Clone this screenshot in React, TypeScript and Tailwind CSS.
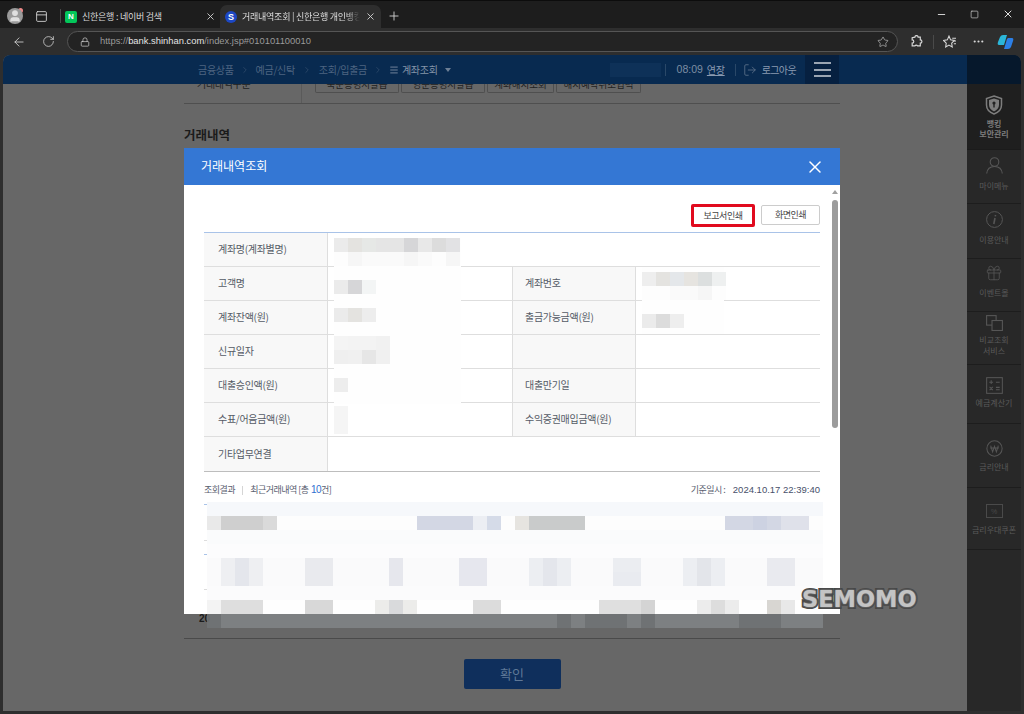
import React from 'react';
import { ArrowLeft, RotateCw, Lock, Star, X, Plus, Minus, Square, MoreHorizontal, ChevronRight, Menu, LogOut, User, Gift, PanelTop } from 'lucide-react';

const kr = 'font-["Noto_Sans_CJK_KR","Noto_Sans",sans-serif]';

type Mosaic = { x: number; y: number; rows: string[][] };

const a = '#ebebeb', b = '#e4e3e0', c = '#d6d6d8', d = '#f6f6f6', e = '#fafafa', w = '#fdfdfd';

// blurred customer data in the account table
const accountBlur: Mosaic[] = [
  { x: 334, y: 238, rows: [[a, b, '#e6e8e6', '#e5e5e5', '#e5e5e5', c, '#e8e8e8', '#dcdcdc', '#e2e2e4'], [w, d, e, e, e, d, e, w, d]] },
  { x: 334, y: 280, rows: [[a, c, '#f3f5f5']] },
  { x: 334, y: 308, rows: [[a, b, '#ededed']] },
  { x: 334, y: 336, rows: [['#f4f4f4', '#f3f3f3', '#f3f3f3', '#f1f1f1'], ['#efefef', '#f0f0f0', '#e6e6e6', '#f0f0f0']] },
  { x: 334, y: 378, rows: [['#ededed']] },
  { x: 334, y: 406, rows: [['#f5f5f5'], ['#f5f5f5']] },
  { x: 642, y: 272, rows: [['#eeeeee', b, '#e4e7ea', '#e6e4e0', '#dcdfdf', '#eef0f0'], [w, w, e, e, d, w]] },
  { x: 642, y: 314, rows: [[a, '#dcdcdc', '#eeeeee']] },
];

// result table mosaic: 44 columns of 14px, 9 rows
const cols = 44;
const paint = (base: string, cells: [number[], string][]) => {
  const row = Array.from({ length: cols }, () => base);
  cells.forEach(([ks, color]) => ks.forEach(k => { row[k] = color; }));
  return row;
};
const blue = '#d3d7e4', gray = '#cfcfcf', pale = '#e9eaef';
const resultRows: string[][] = [
  paint('#f6f8fb', []),
  paint('#fdfdfd', [[[0], '#e9e9e9'], [[1, 2, 3], gray], [[4], '#dadada'], [[15, 16, 17, 18], blue], [[19], '#eceef3'], [[20], '#d5dbe8'], [[22], '#e6e4e0'], [[23, 24, 25, 26], '#c9cbcb'], [[37, 38, 40], blue], [[39], '#cdd2e2'], [[41, 42], '#dfe1ea']]),
  paint('#fafbfc', []),
  paint('#fcfcfd', []),
  paint('#fafafb', [[[1, 3], '#eeeff2'], [[2], '#e4e6ec'], [[7, 8], '#e9eaee'], [[13], '#e6e7ed'], [[18, 19], '#e6e7ee'], [[23, 25], '#eceef2'], [[24], '#e4e6ec'], [[29, 30], '#ebedf1'], [[34, 36], '#eceef2'], [[35], '#e3e5ea'], [[40, 41], pale]]),
  paint('#fafafb', [[[1, 3], '#eeeff2'], [[2], '#e4e6ec'], [[7, 8], '#e9eaee'], [[13], '#e6e7ed'], [[18, 19], '#e6e7ee'], [[23, 25], '#eceef2'], [[24], '#e4e6ec'], [[29, 30], '#e9ebf0'], [[34, 36], '#eceef2'], [[35], '#e3e5ea'], [[40, 41], pale]]),
  paint('#fbfbfc', []),
  paint('#fefefe', [[[0], '#f3f3f3'], [[1, 2, 3], '#dedede'], [[7, 8], '#d8d8d8'], [[12, 14], '#ececea'], [[13], '#d9dadc'], [[19, 20], '#dcdcdc'], [[28, 29, 30], '#dfdfdf'], [[31], '#d4d4d4'], [[35, 37], '#ececec'], [[36], '#dddddd'], [[40], '#d8d6d2'], [[41], '#e8e8e8']]),
];
const darker = [0, 25, 27, 28, 29, 31, 38, 39, 40];
const lastRow = Array.from({ length: cols }, (_, k) => (darker.includes(k) ? 'rgba(112,115,118,0.9)' : 'rgba(128,131,133,0.9)'));

function Pixels({ rows }: { rows: string[][] }) {
  return (
    <div className="flex flex-col">
      {rows.map((r, i) => (
        <div key={i} className="flex">
          {r.map((color, j) => <div key={j} className="w-[14px] h-[14px]" style={{ backgroundColor: color }} />)}
        </div>
      ))}
    </div>
  );
}

function ShieldIcon() {
  return (
    <svg width="18" height="20" viewBox="0 0 18 20" fill="none" stroke="#7d7d7d" strokeWidth="1.5">
      <path d="M9 1 L16.5 3.5 V10 C16.5 14.5 13 17.5 9 19 C5 17.5 1.5 14.5 1.5 10 V3.5 Z" />
      <path d="M4 5 L9 3.4 L14 5 V10 C14 13 12 15 9 16.4 C6 15 4 13 4 10 Z" fill="#7d7d7d" stroke="none" />
      <circle cx="9" cy="8" r="1.6" fill="#222" stroke="none" />
      <rect x="8.3" y="8.5" width="1.4" height="4" fill="#222" stroke="none" />
    </svg>
  );
}

function PersonIcon() {
  return (
    <svg width="17" height="17" viewBox="0 0 17 17" fill="none" stroke="#565656" strokeWidth="1.1">
      <circle cx="8.5" cy="5" r="4.3" />
      <path d="M0.7 16.5 C1.2 12 4 9.5 8.5 9.5 C13 9.5 15.8 12 16.3 16.5" />
    </svg>
  );
}

function InfoIcon() {
  return (
    <svg width="17" height="17" viewBox="0 0 17 17" fill="none" stroke="#565656" strokeWidth="1">
      <circle cx="8.5" cy="8.5" r="7.9" />
      <path d="M9.6 4 L9.3 5.4" strokeWidth="1.6" />
      <path d="M9 7 L7.8 13" strokeWidth="1.6" />
    </svg>
  );
}

function CompareIcon() {
  return (
    <svg width="17" height="16" viewBox="0 0 17 16" fill="none" stroke="#565656" strokeWidth="1.1">
      <rect x="0.6" y="0.6" width="9.5" height="9.5" />
      <rect x="6" y="5.5" width="10.4" height="10" fill="#282828" />
    </svg>
  );
}

function CalcIcon() {
  return (
    <svg width="17" height="17" viewBox="0 0 18 18" fill="none" stroke="#565656" strokeWidth="1.1">
      <rect x="0.7" y="0.7" width="16.6" height="16.6" />
      <path d="M3.5 5.5 H7.5 M5.5 3.5 V7.5 M10.5 5.5 H14.5 M3.8 10.5 L7.2 14 M7.2 10.5 L3.8 14 M10.5 11 H14.5 M10.5 13.5 H14.5" />
    </svg>
  );
}

function WonIcon() {
  return (
    <svg width="17" height="17" viewBox="0 0 20 20" fill="none" stroke="#565656" strokeWidth="1.2">
      <circle cx="10" cy="10" r="9" />
      <path d="M5.5 6.5 L7.8 14 L10 7.5 L12.2 14 L14.5 6.5 M4.8 9.5 H15.2" />
    </svg>
  );
}

function CouponIcon() {
  return (
    <div className="w-[17px] h-[14px] border border-[#4a4a4a] flex items-center justify-center text-[7px] leading-none text-[#4a4a4a] font-['Liberation_Sans',sans-serif]">%</div>
  );
}

const sideItems: { box: string; gap: string; icon: React.ReactNode; lines: string[] }[] = [
  { box: 'h-[54px] pt-[7px]', gap: 'mt-[6px]', icon: <PersonIcon />, lines: ['마이메뉴'] },
  { box: 'h-[55px] pt-[7px]', gap: 'mt-[6px]', icon: <InfoIcon />, lines: ['이용안내'] },
  { box: 'h-[53px] pt-[5px]', gap: 'mt-[5px]', icon: <Gift size={18} strokeWidth={1.1} color="#565656" />, lines: ['이벤트몰'] },
  { box: 'h-[53px] pt-[3px]', gap: 'mt-[3px]', icon: <CompareIcon />, lines: ['비교조회', '서비스'] },
  { box: 'h-[59px] pt-[12px]', gap: 'mt-[3px]', icon: <CalcIcon />, lines: ['예금계산기'] },
  { box: 'h-[64px] pt-[16px]', gap: 'mt-[4px]', icon: <WonIcon />, lines: ['금리안내'] },
  { box: 'h-[62px] pt-[16px]', gap: 'mt-[6px]', icon: <CouponIcon />, lines: ['금리우대쿠폰'] },
];

const infoRows: [string, string?][] = [
  ['고객명', '계좌번호'],
  ['계좌잔액(원)', '출금가능금액(원)'],
  ['신규일자', ''],
  ['대출승인액(원)', '대출만기일'],
  ['수표/어음금액(원)', '수익증권매입금액(원)'],
];

function Label({ children, first, last }: { children?: React.ReactNode; first?: boolean; last?: boolean }) {
  return (
    <div className={`h-[34px] pb-[2px] bg-[#f8f8f8] border-[#dedede] flex items-center text-[10px] tracking-[-0.3px] text-[#555b66] ${first ? 'border-r pl-[14px]' : 'border-x pl-[12px]'} ${last ? '' : 'border-b'}`}>
      {children}
    </div>
  );
}

function Value({ wide, last }: { wide?: boolean; last?: boolean }) {
  return <div className={`h-[34px] border-[#dedede] ${wide ? 'col-span-3' : ''} ${last ? '' : 'border-b'}`} />;
}

export default function App() {
  return (
    <div className={`relative w-[1024px] h-[714px] overflow-hidden bg-[#2e2e2e] flex flex-col ${kr}`}>
      {/* tab strip */}
      <div className="h-[28px] bg-[#1d1d1d] flex items-end shrink-0 pl-[7px] border-t border-[#0c0c0c]">
        <div className="relative w-[16px] h-[16px] rounded-full bg-[#9a9a9a] mb-[4px] flex items-center justify-center overflow-hidden">
          <User size={14} color="#e0e0e0" fill="#e0e0e0" />
        </div>
        <div className="w-[5px] h-[5px] rounded-full bg-[#e88] -ml-[5px] mb-[15px]" />
        <PanelTop size={13} color="#d8d8d8" strokeWidth={1.6} className="ml-[12px] mb-[5px]" />
        <div className="w-px h-[14px] bg-[#4a4a4a] ml-[12px] mb-[5px]" />
        <div className="w-[159px] h-[23px] flex items-center pl-[4px]">
          <div className="w-[12px] h-[12px] bg-[#03c75a] rounded-[2px] text-white text-[8px] font-bold leading-[12px] text-center font-['Liberation_Sans',sans-serif]">N</div>
          <span className="ml-[5px] text-[9px] tracking-[-0.25px] text-[#d8d8d8] whitespace-nowrap">신한은행 : 네이버 검색</span>
          <X size={11} color="#d0d0d0" className="ml-auto mr-[4px]" />
        </div>
        <div className="w-[161px] h-[23px] bg-[#2e2e2e] rounded-t-[7px] flex items-center pl-[5px]">
          <div className="w-[12px] h-[12px] rounded-full bg-[#1c47c4] text-white text-[9px] font-bold leading-[12px] text-center font-['Liberation_Sans',sans-serif]">S</div>
          <span className="ml-[5px] w-[118px] overflow-hidden text-[9px] tracking-[-0.25px] text-[#dddddd] whitespace-nowrap [mask-image:linear-gradient(to_right,black_88%,transparent)]">거래내역조회 | 신한은행 개인뱅킹</span>
          <X size={11} color="#d0d0d0" className="ml-auto mr-[5px]" />
        </div>
        <Plus size={14} color="#d8d8d8" strokeWidth={1.5} className="ml-[6px] mb-[5px]" />
        <div className="ml-auto flex items-center self-start mt-[7px] mr-[10px] gap-[23px]">
          <Minus size={11} color="#e0e0e0" />
          <Square size={9} color="#e0e0e0" strokeWidth={1.6} className="rounded-[2px]" />
          <X size={12} color="#e0e0e0" />
        </div>
      </div>

      {/* toolbar */}
      <div className="h-[27px] bg-[#2e2e2e] flex items-center shrink-0 pl-[12px] pr-[8px]">
        <ArrowLeft size={14} color="#d8d8d8" strokeWidth={1.4} />
        <RotateCw size={13} color="#d8d8d8" strokeWidth={1.4} className="ml-[16px]" />
        <div className="ml-[12px] w-[831px] h-[21px] rounded-full bg-[#232323] border border-[#555555] flex items-center pl-[12px] pr-[8px]">
          <Lock size={10} color="#d8d8d8" strokeWidth={1.6} />
          <span className="ml-[10px] text-[9.4px] text-[#9a9a9a] font-['Liberation_Sans',sans-serif] whitespace-nowrap">https://<span className="text-[#e4e4e4]">bank.shinhan.com</span>/index.jsp#010101100010</span>
          <Star size={12} color="#c8c8c8" strokeWidth={1.3} className="ml-auto" />
        </div>
        <svg width="13" height="13" viewBox="0 0 24 24" fill="none" stroke="#d8d8d8" strokeWidth="2.2" className="ml-[12px]">
          <path d="M9 4a3 3 0 0 1 6 0h4v5a3 3 0 0 1 0 6v5h-5a3 3 0 0 0-5 0H4v-5a3 3 0 0 0 0-6V5z" />
        </svg>
        <div className="w-px h-[14px] bg-[#4a4a4a] ml-[10px]" />
        <svg width="13" height="13" viewBox="0 0 24 24" fill="none" stroke="#d8d8d8" strokeWidth="2" className="ml-[9px]">
          <path d="M11 2 L14 9 L21 10 L16 15 L17 22 L11 18.5 L5 22 L6 15 L1 10 L8 9 Z" />
          <path d="M17 6 H24 M19 11 H24 M20 16 H24" />
        </svg>
        <MoreHorizontal size={13} color="#d8d8d8" className="ml-[16px]" />
        <svg width="17" height="17" viewBox="0 0 17 17" className="ml-[12px]">
          <path d="M6 2 H10 L7 12 H2 Q0 12 1 9 L3 4 Q4 2 6 2 Z" fill="#2bb6d9" />
          <path d="M11 5 H15 Q17 5 16 8 L14 14 Q13 16 11 16 H7 L10 6 Z" fill="#2c7fe6" />
        </svg>
      </div>

      {/* page */}
      <div className="relative flex-1 mx-[3px] mb-[3px] rounded-t-[7px] overflow-hidden flex bg-[#676767]">
        <div className="w-[964px] flex flex-col">
          <div className="h-[29px] bg-[#082a50] flex items-center shrink-0 pl-[195px] text-[10px] tracking-[-0.3px] text-[#4d6480] whitespace-nowrap">
            <span>금융상품</span>
            <ChevronRight size={10} className="mx-[6px]" color="#2f4b6b" />
            <span>예금/신탁</span>
            <ChevronRight size={10} className="mx-[7px]" color="#2f4b6b" />
            <span>조회/입출금</span>
            <ChevronRight size={10} className="mx-[6px]" color="#2f4b6b" />
            <Menu size={10} color="#8494a8" />
            <span className="ml-[3px] text-[#8494a8]">계좌조회</span>
            <span className="ml-[7px] w-0 h-0 border-x-[3px] border-x-transparent border-t-[4px] border-t-[#6d7f95]" />
            <div className="w-[51px] h-[14px] ml-[159px] bg-[#0e3158]" />
            <div className="w-px h-[12px] bg-[#2a4868] ml-[4px]" />
            <span className="ml-[11px] text-[10.5px] tracking-normal text-[#7d8ea3] font-['Liberation_Sans',sans-serif]">08:09</span>
            <span className="ml-[4px] text-[#8a9ab0] underline">연장</span>
            <div className="w-px h-[12px] bg-[#2a4868] ml-[10px]" />
            <LogOut size={14} color="#6d7f95" strokeWidth={1.2} className="ml-[7px]" />
            <span className="ml-[5px] tracking-[-0.6px] text-[#8a9ab0]">로그아웃</span>
            <div className="ml-[9px] w-[34px] h-[29px] bg-[#062040] flex flex-col items-center justify-center gap-[4.5px]">
              <div className="w-[17px] h-[2px] bg-[#9aa5b3]" />
              <div className="w-[17px] h-[2px] bg-[#9aa5b3]" />
              <div className="w-[17px] h-[2px] bg-[#9aa5b3]" />
            </div>
          </div>

          {/* dimmed page behind the dialog */}
          <div className="pl-[181px] w-[837px] flex-1 flex flex-col">
            <div className="h-[20px] border-b border-[#4f4f4f] flex overflow-hidden shrink-0">
              <div className="w-[118px] border-r border-[#5a5a5a] pl-[13px] text-[10px] tracking-[-0.3px] leading-[1] -mt-[5px] text-[#222]">거래내역구분</div>
              <div className="flex gap-[2px] ml-[13px] items-start">
                {[['국문증명서발급', 'w-[84px]'], ['영문증명서발급', 'w-[84px]'], ['계좌해지조회', 'w-[67px]'], ['해지예약취소입력', 'w-[85px]']].map(([t, cw]) => (
                  <div key={t} className={`${cw} h-[9px] border border-[#4f4f4f] border-t-0 rounded-b-[2px] overflow-hidden`}>
                    <div className="-mt-[5px] text-[9.5px] leading-[10px] text-center text-[#222] whitespace-nowrap">{t}</div>
                  </div>
                ))}
              </div>
            </div>
            <div className="mt-[23px] text-[12.5px] leading-[16px] font-bold text-[#1b1b1b]">거래내역</div>
            <div className="mt-[468px] h-[28px] pl-[15px] text-[10px] font-bold leading-[16px] text-[#1b1b1b] border-b border-[#4a4a4a] font-['Liberation_Sans',sans-serif] shrink-0">20</div>
            <div className="mt-[20px] self-center w-[97px] h-[30px] rounded-[2px] bg-[#0f2f5c] flex items-center justify-center text-[13px] text-[#5f7897]">확인</div>
          </div>
        </div>

        {/* quick menu */}
        <div className="w-[54px] bg-[#282828] flex flex-col">
          <div className="h-[29px] bg-[#06182c] shrink-0" />
          <div className="h-[66px] bg-[#1f1f1f] border-b border-[#1b1b1b] flex flex-col items-center justify-center shrink-0">
            <ShieldIcon />
            <div className="mt-[4px] text-[8px] leading-[10px] text-[#7c7c7c] text-center font-bold">뱅킹<br />보안관리</div>
          </div>
          {sideItems.map(item => (
            <div key={item.lines[0]} className={`${item.box} border-b border-[#1d1d1d] flex flex-col items-center shrink-0`}>
              {item.icon}
              <div className={`${item.gap} text-[8px] leading-[11px] text-[#5a5a5a] text-center whitespace-nowrap`}>
                {item.lines.map(l => <div key={l}>{l}</div>)}
              </div>
            </div>
          ))}
        </div>
      </div>

      {/* dialog */}
      <div className="absolute left-[184px] top-[148px] w-[656px] h-[466px] bg-white flex flex-col">
        <div className="h-[37px] bg-[#3477d4] flex items-center justify-between pl-[17px] pr-[15px] shrink-0">
          <span className="text-[12px] leading-[16px] -mt-[2px] text-white">거래내역조회</span>
          <X size={20} color="#ffffff" strokeWidth={1.8} />
        </div>
        <div className="flex-1 flex relative overflow-hidden">
          <div className="w-[636px] pl-[20px] flex flex-col shrink-0">
            <div className="mt-[19px] h-[28px] flex items-start justify-end gap-[6px] shrink-0">
              <div className="w-[64px] h-[23px] border-[3px] border-[#e10a1e] rounded-[2px] flex items-center justify-center text-[9px] tracking-[-0.5px] text-[#444]">보고서인쇄</div>
              <div className="w-[59px] h-[20px] mt-px border border-[#cccccc] rounded-[2px] flex items-center justify-center text-[9px] tracking-[-0.5px] text-[#444]">화면인쇄</div>
            </div>
            <div className="border-t border-[#a9c3e8] grid grid-cols-[124px_184px_124px_184px] shrink-0">
              <Label first>계좌명(계좌별명)</Label>
              <Value wide />
              {infoRows.map(([l, r]) => (
                <React.Fragment key={l}>
                  <Label first>{l}</Label>
                  <Value />
                  <Label>{r}</Label>
                  <Value />
                </React.Fragment>
              ))}
              <Label first last>기타업무연결</Label>
              <Value wide last />
            </div>
            <div className="border-t border-[#bdbdbd]" />
            <div className="mt-[11px] flex items-center justify-between text-[9px] tracking-[-0.5px] leading-[14px] text-[#5a6070]">
              <div className="flex items-center">
                <span>조회결과</span>
                <span className="w-px h-[9px] bg-[#d5d5d5] mx-[7px]" />
                <span>최근거래내역 [총<span className="text-[#2f6fd0] font-['Liberation_Sans',sans-serif] text-[10px]"> 10</span>건]</span>
              </div>
              <div>
                기준일시 : <span className="ml-[6px] text-[9.5px] tracking-normal text-[#48506a] font-['Liberation_Sans',sans-serif]">2024.10.17 22:39:40</span>
              </div>
            </div>
            <div className="mt-[7px] border-t border-[#a9c3e8] h-[36px] border-b-0" />
            <div className="border-t border-[#dddddd] h-[14px]" />
            <div className="border-t border-[#a9c3e8] h-[35px]" />
            <div className="border-t border-[#dddddd]" />
          </div>
          {/* scrollbar */}
          <div className="w-[9px] ml-[10px] flex flex-col items-center shrink-0">
            <div className="mt-[5px] w-0 h-0 border-x-[3px] border-x-transparent border-b-[4px] border-b-[#a0a0a0]" />
            <div className="mt-[6px] w-[6px] h-[228px] rounded-full bg-[#9c9c9c]" />
          </div>
        </div>
      </div>

      {/* mosaics over the dialog */}
      <div className="absolute left-[334px] top-[238px] w-[127px] h-[166px] bg-[#fefefe]" />
      <div className="absolute left-[642px] top-[267px] w-[82px] h-[67px] bg-[#fefefe]" />
      {accountBlur.map(m => (
        <div key={`${m.x}-${m.y}`} className="absolute" style={{ left: m.x, top: m.y }}>
          <Pixels rows={m.rows} />
        </div>
      ))}
      <div className="absolute left-[207px] top-[502px]">
        <Pixels rows={resultRows} />
        <Pixels rows={[lastRow]} />
      </div>

      {/* watermark */}
      <div className="absolute left-[802px] top-[582px] text-[22.5px] leading-[34px] font-bold text-[#c4c4c4] font-['DejaVu_Sans',sans-serif] [-webkit-text-stroke:4px_#464646] [paint-order:stroke_fill] [text-shadow:0_0_2px_#a8a8a8]">SEMOMO</div>
    </div>
  );
}
